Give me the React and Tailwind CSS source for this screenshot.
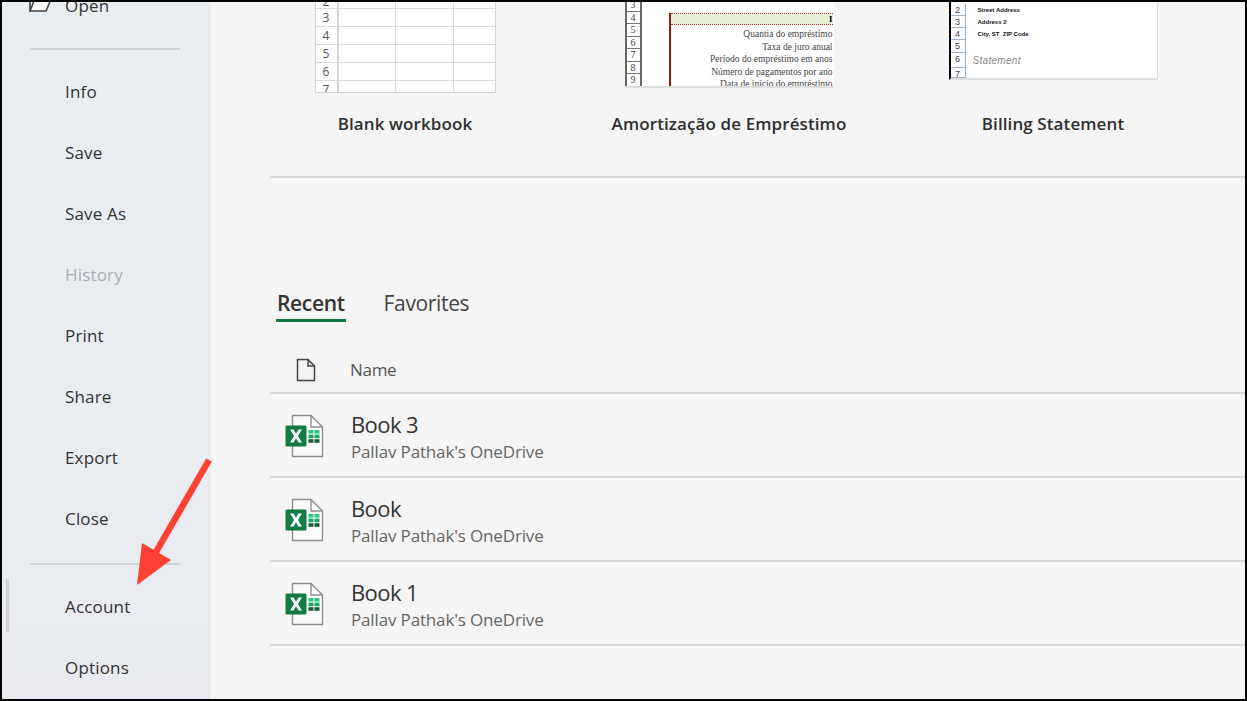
import React from 'react';

const font = "font-['Open_Sans','Noto_Sans',sans-serif]";

const menuTop = ['Info', 'Save', 'Save As', 'History', 'Print', 'Share', 'Export', 'Close'];
const books = ['Book 3', 'Book', 'Book 1'];

const MenuItem = ({ label, muted }) => (
  <div className={`h-[61px] shrink-0 flex items-center pl-[63px] pt-[1px] text-[17px] tracking-[0.01em] ${muted ? 'text-[#a9adb1]' : 'text-[#333]'}`}>
    {label}
  </div>
);

const ExcelIcon = () => (
  <svg width="40" height="44" viewBox="0 0 40 44" className="shrink-0">
    <path d="M7.5 1.5H26L37.5 13V42.5H7.5Z" fill="#fbfbfb" stroke="#8f8f8f" strokeWidth="1.4" />
    <path d="M26 1.5V13H37.5" fill="none" stroke="#8f8f8f" strokeWidth="1.4" />
    <rect x="0.5" y="11.5" width="21" height="21" rx="1.5" fill="#107c41" />
    <path d="M5 15.5H8.6L11 19.8L13.4 15.5H17L13 22L17 28.5H13.4L11 24.2L8.6 28.5H5L9 22Z" fill="#fff" />
    <rect x="23.5" y="16" width="5" height="3.6" fill="#33c481" />
    <rect x="29.5" y="16" width="5" height="3.6" fill="#33c481" />
    <rect x="23.5" y="20.6" width="5" height="3.6" fill="#21a366" />
    <rect x="29.5" y="20.6" width="5" height="3.6" fill="#21a366" />
    <rect x="23.5" y="25.2" width="5" height="3.6" fill="#185c37" />
    <rect x="29.5" y="25.2" width="5" height="3.6" fill="#185c37" />
  </svg>
);

const BlankThumb = () => (
  <div className="w-[181px] h-[91px] bg-white border-x border-b border-[#d4d4d4] flex flex-col justify-start overflow-hidden text-[12px] text-[#555]">
    {['2', '3', '4', '5', '6', '7'].map((n) => (
      <div key={n} className="h-[18px] shrink-0 grid grid-cols-[23px_57px_58px_1fr] border-t border-[#dcdcdc] first:h-[6px] first:border-t-0 first:leading-[0px] leading-[18px]">
        <span className="text-center border-r-2 border-[#d4d4d4]">{n}</span>
        <span className="border-r border-[#dcdcdc]" />
        <span className="border-r border-[#dcdcdc]" />
        <span />
      </div>
    ))}
  </div>
);

const loanRows = [
  ['5', 'Quantia do empréstimo'],
  ['6', 'Taxa de juro anual'],
  ['7', 'Período do empréstimo em anos'],
  ['8', 'Número de pagamentos por ano'],
  ['9', 'Data de início do empréstimo'],
];

const LoanThumb = () => (
  <div className="w-[209px] h-[86px] bg-white border-b-2 border-[#dedede] flex overflow-hidden font-['Liberation_Serif',serif] text-[9.5px] text-[#444]">
    <div className="w-[17px] shrink-0 flex flex-col justify-start -mt-[3px] border-x-2 border-[#666] text-center leading-[12px] text-[10px]">
      {['3', '4', '5', '6', '7', '8', '9'].map((n) => (
        <div key={n} className="h-[12.5px] shrink-0 border-b border-[#777]">{n}</div>
      ))}
    </div>
    <div className="flex-1 pl-[27px] pr-[1px] pt-[11px]">
      <div className="h-full border-l-2 border-[#8a1c1c]">
        <div className="h-[12px] bg-[#e6eed5] border-y border-dotted border-[#a33] text-right text-[9px] font-bold leading-[10px] text-black">I</div>
        <div className="pt-[2px]">
          {loanRows.map(([n, text]) => (
            <div key={n} className="h-[12.5px] text-right whitespace-nowrap leading-[14px]">{text}</div>
          ))}
        </div>
      </div>
    </div>
  </div>
);

const billingRows = [
  { n: '2', text: 'Street Address', h: 'h-[12px]' },
  { n: '3', text: 'Address 2', h: 'h-[12px]' },
  { n: '4', text: 'City, ST  ZIP Code', h: 'h-[12px]' },
  { n: '5', text: '', h: 'h-[13px]' },
  { n: '6', text: '', h: 'h-[15px]' },
  { n: '7', text: '', h: 'h-[10px]' },
];

const BillingThumb = () => (
  <div className="w-[209px] h-[78px] pt-[2px] bg-white border-r border-b-2 border-[#dedede] border-l-2 border-l-black flex flex-col justify-start overflow-hidden font-['Liberation_Sans',sans-serif] text-[#111]">
    {billingRows.map((row) => (
      <div key={row.n} className={`${row.h} shrink-0 flex items-center relative`}>
        <span className="w-[15px] h-full shrink-0 text-center text-[9px] leading-[13px] border-r border-b border-[#9db4cc] text-[#444]">{row.n}</span>
        {row.n === '6' ? (
          <span className="ml-[7px] text-[10px] italic text-[#888] tracking-[0.3px]">Statement</span>
        ) : (
          <span className="ml-[12px] text-[6px] font-bold whitespace-pre">{row.text}</span>
        )}
      </div>
    ))}
  </div>
);

const tiles = [
  { label: 'Blank workbook', thumb: <BlankThumb /> },
  { label: 'Amortização de Empréstimo', thumb: <LoanThumb /> },
  { label: 'Billing Statement', thumb: <BillingThumb /> },
];

export default function App() {
  return (
    <div className={`${font} w-[1247px] h-[701px] border-2 border-black bg-[#f5f5f5] flex overflow-hidden relative`}>
      <aside className="w-[208px] shrink-0 bg-gradient-to-b from-[#e9eef2] to-[#e9ebf0] border-r border-[#e2e5e9] flex flex-col overflow-hidden">
        <div className="h-[61px] shrink-0 -mt-[26.5px] flex items-center text-[17px] tracking-[0.01em] text-[#333]">
          <svg width="24" height="20" viewBox="0 0 24 20" className="ml-[27px] mr-[12px] mt-[-6px]">
            <path d="M1 18V3H8M1 18H17L23 4H6.5L1 18Z" fill="#fafafa" stroke="#444" strokeWidth="1.6" />
          </svg>
          Open
        </div>
        <div className="h-[24px] shrink-0 flex items-center pl-[28px]">
          <div className="w-[150px] h-[2px] bg-[#d2d3d5]" />
        </div>
        {menuTop.map((label) => (
          <MenuItem key={label} label={label} muted={label === 'History'} />
        ))}
        <div className="h-[27px] shrink-0 flex items-center pl-[28px] pt-[3px]">
          <div className="w-[150px] h-[2px] bg-[#d2d3d5]" />
        </div>
        <div className="relative">
          <div className="absolute left-[4px] top-[3px] w-[3px] h-[53px] bg-[#d0d2d3]" />
          <MenuItem label="Account" />
        </div>
        <MenuItem label="Options" />
      </aside>

      <main className="flex-1 min-w-0 pl-[60px] flex flex-col text-[#333]">
        <div className="grid grid-cols-[270px_270px_270px] gap-x-[54px] shrink-0">
          {tiles.map((tile) => (
            <div key={tile.label} className="flex flex-col items-center">
              <div className="h-[91px] flex items-start">{tile.thumb}</div>
              <div className="mt-[21px] text-[17px] font-semibold tracking-[0.1px] leading-[20px] whitespace-nowrap text-[#2f2f2f]">{tile.label}</div>
            </div>
          ))}
        </div>
        <div className="mt-[42px] h-[2px] bg-[#d8d8d8] shrink-0" />

        <div className="mt-[111px] flex gap-[38px] text-[21px] leading-[28px] tracking-[-0.35px] shrink-0">
          <div className="relative pl-[7px] pr-[1px]">
            <span className="font-semibold text-[#333]">Recent</span>
            <div className="absolute left-[6px] right-0 top-[30px] h-[3px] bg-[#0e7a41]" />
          </div>
          <span className="text-[#444]">Favorites</span>
        </div>

        <div className="mt-[30px] h-[47px] flex items-center border-b-2 border-[#d8d8d8] shrink-0">
          <svg width="20" height="24" viewBox="0 0 20 24" className="ml-[26px] shrink-0">
            <path d="M1.5 1.5H12L18.5 8V22.5H1.5Z" fill="none" stroke="#444" strokeWidth="1.5" />
            <path d="M12 1.5V8H18.5" fill="none" stroke="#444" strokeWidth="1.5" />
          </svg>
          <span className="ml-[34px] text-[17px] tracking-[-0.3px] text-[#555]">Name</span>
        </div>

        {books.map((name) => (
          <div key={name} className="h-[84px] shrink-0 flex items-center border-b-2 border-[#d8d8d8]">
            <div className="ml-[15px] mt-[2px] shrink-0"><ExcelIcon /></div>
            <div className="ml-[26px] mt-[3px] flex flex-col">
              <span className="text-[22px] leading-[29px] tracking-[-0.6px] text-[#333]">{name}</span>
              <span className="text-[17px] leading-[25px] tracking-[-0.15px] text-[#666]">Pallav Pathak's OneDrive</span>
            </div>
          </div>
        ))}
      </main>

      <svg width="90" height="135" viewBox="0 0 90 135" className="absolute left-[130px] top-[452px] pointer-events-none">
        <path d="M77 6L24 98" stroke="#ff4133" strokeWidth="6.5" fill="none" />
        <path d="M10 89L39 106L5 131Z" fill="#ff4133" />
      </svg>
    </div>
  );
}
